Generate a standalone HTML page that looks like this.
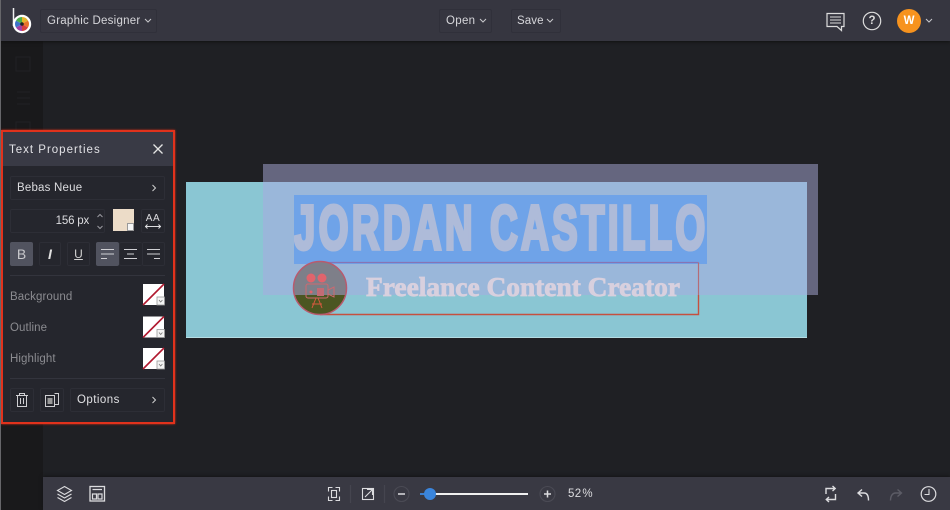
<!DOCTYPE html>
<html><head><meta charset="utf-8">
<style>
html,body{margin:0;padding:0}
body{width:950px;height:510px;overflow:hidden;position:relative;background:#1f2024;font-family:"Liberation Sans",sans-serif;color:#d8d8dc}
div{position:absolute;box-sizing:border-box}
svg{position:absolute;overflow:visible}
.t{white-space:nowrap;line-height:16px}
.btn{border:1px solid #30303a;border-radius:2px}
.pb{border:1px solid #2d2e36;border-radius:2px}
</style></head><body>
<div style="left:0;top:0;width:1px;height:510px;background:#66666a;z-index:5"></div>
<div style="left:1px;top:41px;width:42px;height:469px;background:#19191b"></div>
<div style="left:0;top:0;width:950px;height:41px;background:#363640;box-shadow:0 1px 3px #111"></div>
<div style="left:43px;top:477px;width:907px;height:33px;background:#393943;box-shadow:0 -1px 3px #151517"></div>

<!-- dim sidebar icons -->
<svg style="left:0;top:0" width="45" height="130" fill="none" stroke="#212124" stroke-width="1"><rect x="16" y="57" width="14" height="14"/><path d="M17 92h13M17 98h13M17 104h13"/><rect x="16" y="122" width="14" height="10"/></svg>

<!-- logo -->
<svg style="left:0;top:0" width="40" height="40" viewBox="0 0 40 40">
<path d="M13.500 8V26" stroke="#f1f1f1" stroke-width="1.500" fill="none"/>
<circle cx="22" cy="24" r="9.200" fill="#fff"/>
<path d="M22 24V17a7 7 0 0 1 6 3.500z" fill="#e4b32c"/><path d="M22 24l6-3.500a7 7 0 0 1 0 7z" fill="#e8732a"/><path d="M22 24l6 3.500a7 7 0 0 1-6 3.500z" fill="#d63f3f"/><path d="M22 24v7a7 7 0 0 1-6-3.500z" fill="#a33fa5"/><path d="M22 24l-6 3.500a7 7 0 0 1 0-7z" fill="#3d73c9"/><path d="M22 24l-6-3.500a7 7 0 0 1 6-3.500z" fill="#4cae4c"/>
<circle cx="22" cy="24" r="1.800" fill="#222"/>
</svg>
<div class="btn" style="left:40px;top:9px;width:117px;height:24px"></div>
<div class="t" style="left:47px;top:13px;font-size:11.500px;letter-spacing:.25px;color:#d6d6da">Graphic Designer</div>
<svg style="left:144px;top:18px" width="8" height="6" fill="none" stroke="#c8c8cc" stroke-width="1"><path d="M1 1l3 3 3-3"/></svg>

<div class="btn" style="left:439px;top:9px;width:53px;height:24px"></div>
<div class="t" style="left:446px;top:13px;font-size:11.500px;letter-spacing:.3px;color:#d6d6da">Open</div>
<svg style="left:479px;top:18px" width="8" height="6" fill="none" stroke="#c8c8cc" stroke-width="1"><path d="M1 1l3 3 3-3"/></svg>
<div class="btn" style="left:511px;top:9px;width:50px;height:24px"></div>
<div class="t" style="left:517px;top:13px;font-size:11.500px;letter-spacing:.1px;color:#d6d6da">Save</div>
<svg style="left:546px;top:18px" width="8" height="6" fill="none" stroke="#c8c8cc" stroke-width="1"><path d="M1 1l3 3 3-3"/></svg>

<!-- top right -->
<svg style="left:820px;top:5px" width="100" height="32" fill="none" stroke="#dcdcdc" stroke-width="1.200">
<path d="M7 8.500h17v13h-2.500v4l-4.500-4H7z"/><path d="M10 12h11M10 15h11M10 18h11" stroke-width="1"/>
<circle cx="52" cy="16" r="8.700"/>
</svg>
<div class="t" style="left:868px;top:13px;width:8px;text-align:center;font-size:11.500px;font-weight:bold;color:#dcdcdc">?</div>
<div style="left:897px;top:9px;width:24px;height:24px;border-radius:50%;background:#f7931e;color:#fff;font-size:11.500px;font-weight:bold;text-align:center;line-height:24px">W</div>
<svg style="left:925px;top:18px" width="8" height="6" fill="none" stroke="#c8c8cc" stroke-width="1"><path d="M1 1l3 3 3-3"/></svg>

<!-- artwork -->
<svg style="left:0;top:0" width="950" height="510" viewBox="0 0 950 510">
<rect x="186" y="182" width="621" height="156" fill="#8ac6d3"/>
<path d="M186 337.500h621" stroke="#b5dde4" stroke-width="1"/>
<rect x="263" y="164" width="555" height="131" fill="#65667f"/>
<rect x="263" y="182" width="544" height="113" fill="#9ab7da"/>
<rect x="294" y="195" width="413" height="69" fill="#6fa3e8"/>
<clipPath id="sel"><rect x="294" y="195" width="413" height="69"/></clipPath>
<g clip-path="url(#sel)"><text transform="translate(294 249) scale(.615 1)" font-family="Liberation Sans" font-weight="bold" font-size="62" letter-spacing="5.700" fill="#aebbd9" stroke="#aebbd9" stroke-width="4">JORDAN CASTILLO</text></g>
<text x="366" y="296" font-family="Liberation Serif" font-weight="bold" font-size="27" fill="#d8d0de" stroke="#d8d0de" stroke-width=".8" textLength="314" lengthAdjust="spacingAndGlyphs">Freelance Content Creator</text>
<path d="M320 262.500H698.500" stroke="#8674b4" stroke-width="1.200" fill="none"/>
<path d="M698.500 262.500V295" stroke="#b46c78" stroke-width="1.200" fill="none"/>
<path d="M698.500 295V314.500H320" stroke="#c6503f" stroke-width="1.400" fill="none"/>
<clipPath id="up"><rect x="285" y="255" width="70" height="40"/></clipPath>
<clipPath id="dn"><rect x="285" y="295" width="70" height="30"/></clipPath>
<circle cx="320" cy="288" r="26.500" fill="#7e7f89" clip-path="url(#up)"/>
<circle cx="320" cy="288" r="26.500" fill="#4b5621" clip-path="url(#dn)"/>
<circle cx="320" cy="288" r="26.500" fill="none" stroke="#b85a6e" stroke-width="1.500"/>
<circle cx="311" cy="278" r="4.500" fill="#e0646c"/><circle cx="322" cy="278" r="4.500" fill="#e0646c"/>
<g fill="none" stroke="#cd6a70" stroke-width="1"><rect x="306" y="284" width="22" height="14" rx="2"/><path d="M328 290l6-3v10l-6-3"/><path d="M316 298l-4 10M318 298l4 10M312 304h10" stroke="#d8593f"/></g>
<rect x="317" y="288" width="7" height="8" fill="#c36b75"/><circle cx="311" cy="292" r="1.500" fill="#e0646c"/>
</svg>

<!-- panel -->
<div style="left:1px;top:130px;width:174px;height:294px;background:#25262d;border:2px solid #e1321c;box-shadow:0 0 2px #e1321c"></div>
<div style="left:3px;top:132px;width:170px;height:34px;background:#393a45"></div>
<div class="t" style="left:9px;top:142px;font-size:11.500px;letter-spacing:1px;color:#e2e2e6">Text Properties</div>
<svg style="left:152px;top:143px" width="12" height="12" stroke="#e4e4e4" stroke-width="1.300"><path d="M1.500 1.500l9 9M10.500 1.500l-9 9"/></svg>

<div class="pb" style="left:10px;top:176px;width:155px;height:24px"></div>
<div class="t" style="left:17px;top:180px;font-size:11.500px;letter-spacing:.2px;color:#dcdcdf">Bebas Neue</div>
<svg style="left:151px;top:184px" width="6" height="8" fill="none" stroke="#d0d0d0"><path d="M1.500 1l3 3-3 3"/></svg>

<div class="pb" style="left:10px;top:209px;width:95px;height:24px"></div>
<div class="t" style="left:39px;top:213px;width:50px;text-align:right;font-size:11.500px;letter-spacing:-.2px;color:#dcdcdf">156 px</div>
<svg style="left:95px;top:211px" width="10" height="20" fill="none" stroke="#9a9aa0"><path d="M2.500 6l2.500-2.500 2.500 2.500M2.500 15l2.500 2.500 2.500-2.500"/></svg>
<div style="left:113px;top:209px;width:21px;height:22px;background:#ecdcc8"></div>
<div style="left:127px;top:223px;width:7px;height:8px;background:#f5f5f5;border:1px solid #999"></div>
<div class="pb" style="left:141px;top:209px;width:24px;height:24px"></div>
<div class="t" style="left:141px;top:211px;width:24px;text-align:center;font-size:10px;letter-spacing:.6px;color:#dcdcdf">AA</div>
<svg style="left:145px;top:224px" width="16" height="5" fill="none" stroke="#dcdcdf"><path d="M0 2.500h16M2.500 .5l-2 2 2 2M13.500 .5l2 2-2 2"/></svg>

<div style="left:10px;top:242px;width:23px;height:24px;background:#51535f;border-radius:2px"></div>
<div class="t" style="left:10px;top:246px;width:23px;text-align:center;font-size:14px;color:#c8c8cc">B</div>
<div class="pb" style="left:39px;top:242px;width:22px;height:24px"></div>
<div class="t" style="left:39px;top:246px;width:22px;text-align:center;font-size:14px;font-style:italic;font-weight:bold;color:#e0e0e0">I</div>
<div class="pb" style="left:67px;top:242px;width:23px;height:24px"></div>
<div class="t" style="left:67px;top:246px;width:23px;text-align:center;font-size:12px;color:#d0d0d0"><u>U</u></div>
<div style="left:96px;top:242px;width:23px;height:24px;background:#51535f;border-radius:2px"></div>
<div class="pb" style="left:119px;top:242px;width:23px;height:24px;border-right:0"></div>
<div class="pb" style="left:142px;top:242px;width:23px;height:24px"></div>
<svg style="left:96px;top:242px" width="70" height="24" fill="none" stroke="#d0d0d4" stroke-width="1"><path d="M5 7.500h13M5 12h13M5 16.500h6"/><path d="M28 7.500h13M31 12h7M28 16.500h13"/><path d="M51 7.500h13M51 12h13M58 16.500h6"/></svg>

<div style="left:10px;top:275px;width:155px;height:1px;background:#33343d"></div>
<div class="t" style="left:10px;top:289px;font-size:11.500px;letter-spacing:.1px;color:#8b8b90">Background</div>
<div class="t" style="left:10px;top:320px;font-size:11.500px;letter-spacing:.1px;color:#8b8b90">Outline</div>
<div class="t" style="left:10px;top:351px;font-size:11.500px;letter-spacing:.1px;color:#8b8b90">Highlight</div>
<svg style="left:143px;top:284px" width="22" height="85">
<g><rect width="21" height="21" fill="#fff"/><path d="M0 21L21 0" stroke="#b0192f" stroke-width="1.600"/><rect x="14" y="13" width="7.500" height="8" fill="#f3f3f3" stroke="#999" stroke-width=".8"/><path d="M16 16l1.700 2 1.700-2" fill="none" stroke="#777" stroke-width=".8"/></g>
<g transform="translate(0,32.500)"><rect width="21" height="21" fill="#fff"/><path d="M0 21L21 0" stroke="#b0192f" stroke-width="1.600"/><rect x="14" y="13" width="7.500" height="8" fill="#f3f3f3" stroke="#999" stroke-width=".8"/><path d="M16 16l1.700 2 1.700-2" fill="none" stroke="#777" stroke-width=".8"/></g>
<g transform="translate(0,64)"><rect width="21" height="21" fill="#fff"/><path d="M0 21L21 0" stroke="#b0192f" stroke-width="1.600"/><rect x="14" y="13" width="7.500" height="8" fill="#f3f3f3" stroke="#999" stroke-width=".8"/><path d="M16 16l1.700 2 1.700-2" fill="none" stroke="#777" stroke-width=".8"/></g>
</svg>
<div style="left:10px;top:378px;width:155px;height:1px;background:#33343d"></div>

<div class="pb" style="left:10px;top:388px;width:24px;height:24px"></div>
<svg style="left:10px;top:388px" width="24" height="24" fill="none" stroke="#cfcfd2" stroke-width="1"><path d="M6 7.500h12M9.500 7.500V5.500h5v2M7.500 7.500v11h9v-11M10.500 10v6M13.500 10v6"/></svg>
<div class="pb" style="left:40px;top:388px;width:24px;height:24px"></div>
<svg style="left:40px;top:388px" width="24" height="24" fill="none" stroke="#cfcfd2" stroke-width="1"><rect x="5.500" y="7.500" width="9" height="11"/><path d="M14.500 5.500h4v11h-4"/><rect x="7.500" y="10" width="5" height="6" fill="#999" stroke="none"/></svg>
<div class="pb" style="left:70px;top:388px;width:95px;height:24px"></div>
<div class="t" style="left:77px;top:392px;font-size:11.500px;letter-spacing:.45px;color:#e0e0e3">Options</div>
<svg style="left:151px;top:396px" width="6" height="8" fill="none" stroke="#d0d0d0"><path d="M1.500 1l3 3-3 3"/></svg>

<!-- bottom -->
<svg style="left:0;top:470px" width="950" height="40" fill="none" stroke="#dcdcdf" stroke-width="1.100">
<path d="M64.500 16.500l7 4-7 4-7-4z"/><path d="M57.500 24l7 4 7-4M57.500 27.500l7 4 7-4"/>
<rect x="90" y="16.500" width="14.500" height="14.500" stroke-width="1.300"/><path d="M92.500 19.500h9.500M92.500 24h4v5h-4zM98 24h4v5h-4z" stroke-width="1.200"/>
<path d="M328.500 21.500v-4h4M335.500 17.500h4v4M339.500 26.500v4h-4M332.500 30.500h-4v-4"/><rect x="331.500" y="20.500" width="5" height="7"/>
<path d="M350.500 15v18" stroke="#45454f"/>
<rect x="362.500" y="18.500" width="11" height="11"/><path d="M365 27l7-7M367 19.500h5.500v5.500"/>
<path d="M384.500 15v18" stroke="#45454f"/>
<circle cx="401.500" cy="24" r="7.500" stroke="#4a4a54"/><path d="M398 24h7" stroke-width="1.500"/>
<path d="M420 24h10" stroke="#3b7fd1" stroke-width="2"/><path d="M430 24h98" stroke="#f0f0f0" stroke-width="2"/>
<circle cx="547.500" cy="24" r="7.500" stroke="#4a4a54"/><path d="M544 24h7M547.500 20.500v7" stroke-width="1.500"/>
<path d="M826 24v-5.500h9M832.500 16l2.700 2.500-2.700 2.500M835.500 24v5.500h-9M829 27l-2.700 2.500 2.700 2.500" stroke-width="1.400"/>
<path d="M862 19.500l-4 3.500 4 3.500M858 23h6c3 0 4.500 3 4.500 7.500" stroke-width="1.400"/>
<path d="M897.500 19.500l4 3.500-4 3.500M901.500 23h-6c-3 0-5 3-5 7.500" stroke="#5c5c66" stroke-width="1.400"/>
<circle cx="928.500" cy="24" r="7.300" stroke-width="1.200"/><path d="M929 19v5.500h-4.500"/>
</svg>
<div style="left:424px;top:488px;width:12px;height:12px;border-radius:50%;background:#3a85dc"></div>
<div class="t" style="left:568px;top:486px;font-size:11.500px;letter-spacing:.3px;color:#dcdcdf">52<span style="margin-left:1px">%</span></div>
</body></html>
